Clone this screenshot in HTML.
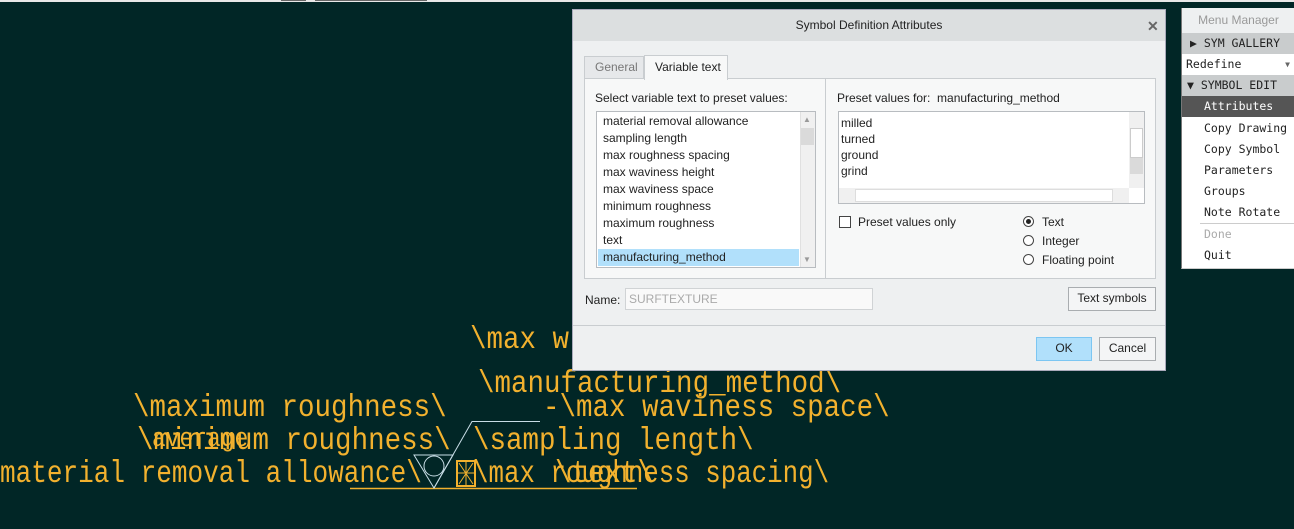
<!DOCTYPE html>
<html><head><meta charset="utf-8"><style>
*{margin:0;padding:0;box-sizing:border-box}
body{width:1294px;height:529px;overflow:hidden;background:#012626;position:relative;font-family:"Liberation Sans",sans-serif;font-size:12px;color:#222}
.a{position:absolute}
.cad{position:absolute;font-family:"Liberation Mono",monospace;font-size:24px;color:#f2b12e;white-space:pre;line-height:1;transform:scale(1.146,1.3);transform-origin:0 100%}
.dlg{left:572px;top:9px;width:594px;height:362px;background:#eef0f1;border:1px solid #aab}
.row{position:absolute;left:6px;height:17px;line-height:17px}
.mm div{position:absolute;left:0;width:113px;height:21px;line-height:21px;font-family:"DejaVu Sans Mono","Liberation Mono",monospace;font-size:11.5px;color:#222}
.btn{position:absolute;background:#f4f5f6;border:1px solid #a9adb0;text-align:center;line-height:21px}
.rad{position:absolute;width:11px;height:11px;border:1px solid #444;border-radius:50%;background:#fff}
</style></head><body>
<div class="a" style="left:0;top:0;width:1294px;height:2px;background:#e8e8e8"></div>
<div class="a" style="left:281px;top:0;width:25px;height:1px;background:#666"></div>
<div class="a" style="left:315px;top:0;width:112px;height:1px;background:#666"></div>

<div class="cad" style="left:470px;top:333px">\max w</div>
<div class="cad" style="left:478px;top:377px">\manufacturing_method\</div>
<div class="cad" style="left:133px;top:401px">\maximum roughness\</div>
<div class="cad" style="left:543px;top:401px">-\max waviness space\</div>
<div class="cad" style="left:137px;top:434px">\minimum roughness\</div>
<div class="cad" style="left:152px;top:434px;font-size:20px">average</div>
<div class="cad" style="left:473px;top:434px">\sampling length\</div>
<div class="cad" style="left:0px;top:467px;transform:scale(1.085,1.3)">material removal allowance\</div>
<div class="cad" style="left:473px;top:467px;transform:scale(1.075,1.3)">\max roughness spacing\</div>
<div class="cad" style="left:555px;top:467px">\text\</div>
<svg class="a" style="left:0;top:0" width="1294" height="529">
<line x1="350" y1="488.5" x2="637" y2="488.5" stroke="#f2b12e" stroke-width="1.5"/>
<polyline points="540,421.5 472,421.5 434,488" fill="none" stroke="#c8dde6" stroke-width="1"/>
<polygon points="414,455 453,455 434,488" fill="none" stroke="#c8dde6"/>
<circle cx="434" cy="466" r="10" fill="none" stroke="#c8dde6"/>
<rect x="457" y="461" width="18" height="25" fill="none" stroke="#f2b12e" stroke-width="2"/>
<path d="M457 473h18M466 461v25M459 463l14 21M473 463l-14 21" stroke="#f2b12e"/>
</svg>

<div class="a dlg">
 <div class="a" style="left:0;top:0;width:592px;height:31px;background:#dcdfe0;text-align:center;line-height:31px;font-size:12px">Symbol Definition Attributes</div>
 <div class="a" style="left:574px;top:8px;font-size:14px;font-weight:bold;color:#666">✕</div>
 <div class="a" style="left:11px;top:46px;width:60px;height:23px;border:1px solid #c9cdd0;background:#e6e8ea;color:#777;line-height:21px;padding-left:10px">General</div>
 <div class="a" style="left:71px;top:45px;width:84px;height:25px;border:1px solid #c9cdd0;border-bottom:none;background:#f7f8f8;line-height:23px;padding-left:10px;z-index:2">Variable text</div>
 <div class="a" style="left:11px;top:68px;width:572px;height:201px;border:1px solid #c9cdd0;background:#f7f8f8"></div>
 <div class="a" style="left:252px;top:69px;width:1px;height:199px;background:#c9cdd0"></div>
 <div class="a" style="left:22px;top:81px">Select variable text to preset values:</div>
 <div class="a" style="left:23px;top:101px;width:220px;height:157px;border:1px solid #b8bcc0;background:#fff">
  <div class="row" style="top:1px">material removal allowance</div>
  <div class="row" style="top:18px">sampling length</div>
  <div class="row" style="top:35px">max roughness spacing</div>
  <div class="row" style="top:52px">max waviness height</div>
  <div class="row" style="top:69px">max waviness space</div>
  <div class="row" style="top:86px">minimum roughness</div>
  <div class="row" style="top:103px">maximum roughness</div>
  <div class="row" style="top:120px">text</div>
  <div class="a" style="left:1px;top:137px;width:201px;height:17px;background:#b1e0fb"></div>
  <div class="row" style="top:137px">manufacturing_method</div>
  <div class="a" style="left:203px;top:0;width:15px;height:155px;background:#f0f0f0;border-left:1px solid #e0e0e0"></div>
  <div class="a" style="left:204px;top:16px;width:13px;height:17px;background:#dadada"></div>
  <div class="a" style="left:206px;top:3px;font-size:8px;color:#999">▲</div>
  <div class="a" style="left:206px;top:143px;font-size:8px;color:#999">▼</div>
 </div>
 <div class="a" style="left:264px;top:81px">Preset values for:&nbsp; manufacturing_method</div>
 <div class="a" style="left:265px;top:101px;width:307px;height:93px;border:1px solid #b8bcc0;background:#fff">
  <div class="row" style="left:2px;top:3px;height:16px;line-height:16px">milled</div>
  <div class="row" style="left:2px;top:19px;height:16px;line-height:16px">turned</div>
  <div class="row" style="left:2px;top:35px;height:16px;line-height:16px">ground</div>
  <div class="row" style="left:2px;top:51px;height:16px;line-height:16px">grind</div>
  <div class="a" style="left:290px;top:0;width:15px;height:76px;background:#f0f0f0"></div>
  <div class="a" style="left:291px;top:16px;width:13px;height:30px;background:#fff;border:1px solid #ccc"></div>
  <div class="a" style="left:291px;top:46px;width:13px;height:16px;background:#dadada"></div>
  <div class="a" style="left:0;top:76px;width:290px;height:15px;background:#f0f0f0"></div>
  <div class="a" style="left:16px;top:77px;width:258px;height:13px;background:#fff;border:1px solid #ddd"></div>
 </div>
 <div class="a" style="left:266px;top:206px;width:12px;height:12px;border:1px solid #444;background:#fff"></div>
 <div class="a" style="left:285px;top:205px">Preset values only</div>
 <div class="rad" style="left:450px;top:206px"></div><div class="a" style="left:453px;top:209px;width:5px;height:5px;border-radius:50%;background:#222"></div>
 <div class="a" style="left:469px;top:205px">Text</div>
 <div class="rad" style="left:450px;top:225px"></div><div class="a" style="left:469px;top:224px">Integer</div>
 <div class="rad" style="left:450px;top:244px"></div><div class="a" style="left:469px;top:243px">Floating point</div>
 <div class="a" style="left:12px;top:283px">Name:</div>
 <div class="a" style="left:52px;top:278px;width:248px;height:22px;border:1px solid #d0d3d5;background:#f9f9f9;color:#aaa;line-height:20px;padding-left:3px">SURFTEXTURE</div>
 <div class="btn" style="left:495px;top:277px;width:88px;height:24px">Text symbols</div>
 <div class="a" style="left:0;top:315px;width:592px;height:1px;background:#c9cdd0"></div>
 <div class="btn" style="left:463px;top:327px;width:56px;height:24px;background:#b1e0fb;border-color:#7cc6f2">OK</div>
 <div class="btn" style="left:526px;top:327px;width:57px;height:24px">Cancel</div>
</div>

<div class="a mm" style="left:1181px;top:8px;width:113px;height:261px;background:#fff;border-left:1px solid #777;border-bottom:1px solid #ccc">
 <div style="top:0;background:#eef0f1;color:#999;text-align:center;font-family:'Liberation Sans',sans-serif;font-size:12px;height:25px;line-height:25px">Menu Manager</div>
 <div style="top:25px;background:#c9cccd;padding-left:8px">▶ SYM GALLERY</div>
 <div style="top:46px;padding-left:4px;height:21px">Redefine<span style="position:absolute;right:5px;font-size:8px;color:#666">▼</span></div>
 <div style="top:67px;background:#c9cccd;padding-left:5px">▼ SYMBOL EDIT</div>
 <div style="top:88px;background:#555;color:#fff;padding-left:22px">Attributes</div>
 <div style="top:110px;padding-left:22px">Copy Drawing</div>
 <div style="top:131px;padding-left:22px">Copy Symbol</div>
 <div style="top:152px;padding-left:22px">Parameters</div>
 <div style="top:173px;padding-left:22px">Groups</div>
 <div style="top:194px;padding-left:22px">Note Rotate</div>
 <div style="top:215px;left:18px;width:95px;height:1px;background:#ccc"></div>
 <div style="top:216px;padding-left:22px;color:#aaa">Done</div>
 <div style="top:237px;padding-left:22px">Quit</div>
</div>
</body></html>
